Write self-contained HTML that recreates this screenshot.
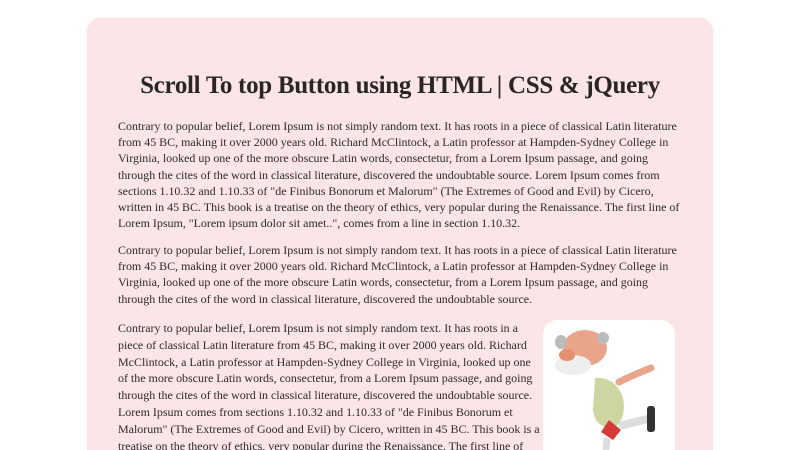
<!DOCTYPE html>
<html><head><meta charset="utf-8"><style>
html,body{margin:0;background:#fff;width:800px;height:450px;overflow:hidden;font-family:"Liberation Serif",serif;color:#2e2a2a}
.card{position:absolute;left:87px;top:18px;width:626px;height:432px;background:#fbe5e6;border-radius:14px 14px 0 0;box-shadow:0 0 4px rgba(0,0,0,.06);overflow:hidden}
h1{position:absolute;left:0;width:626px;top:54px;margin:0;text-align:center;font-size:25px;letter-spacing:-0.3px;font-weight:bold;color:#2b2626}
.p{position:absolute;left:31px;font-size:12px;letter-spacing:-0.02px;line-height:16.2px}
.p div{white-space:nowrap}
.img{position:absolute;left:456px;top:302px;width:132px;height:130px;background:#fff;border-radius:14px 14px 0 0;overflow:hidden}
</style></head><body>
<div class="card">
<h1>Scroll To top Button using HTML | CSS &amp; jQuery</h1>
<div class="p" style="top:100px">
<div>Contrary to popular belief, Lorem Ipsum is not simply random text. It has roots in a piece of classical Latin literature</div>
<div>from 45 BC, making it over 2000 years old. Richard McClintock, a Latin professor at Hampden-Sydney College in</div>
<div>Virginia, looked up one of the more obscure Latin words, consectetur, from a Lorem Ipsum passage, and going</div>
<div>through the cites of the word in classical literature, discovered the undoubtable source. Lorem Ipsum comes from</div>
<div>sections 1.10.32 and 1.10.33 of "de Finibus Bonorum et Malorum" (The Extremes of Good and Evil) by Cicero,</div>
<div>written in 45 BC. This book is a treatise on the theory of ethics, very popular during the Renaissance. The first line of</div>
<div>Lorem Ipsum, "Lorem ipsum dolor sit amet..", comes from a line in section 1.10.32.</div>
</div>
<div class="p" style="top:224px">
<div>Contrary to popular belief, Lorem Ipsum is not simply random text. It has roots in a piece of classical Latin literature</div>
<div>from 45 BC, making it over 2000 years old. Richard McClintock, a Latin professor at Hampden-Sydney College in</div>
<div>Virginia, looked up one of the more obscure Latin words, consectetur, from a Lorem Ipsum passage, and going</div>
<div>through the cites of the word in classical literature, discovered the undoubtable source.</div>
</div>
<div class="p" style="top:302px;line-height:16.8px;height:130px;overflow:hidden">
<div>Contrary to popular belief, Lorem Ipsum is not simply random text. It has roots in a</div>
<div>piece of classical Latin literature from 45 BC, making it over 2000 years old. Richard</div>
<div>McClintock, a Latin professor at Hampden-Sydney College in Virginia, looked up one</div>
<div>of the more obscure Latin words, consectetur, from a Lorem Ipsum passage, and going</div>
<div>through the cites of the word in classical literature, discovered the undoubtable source.</div>
<div>Lorem Ipsum comes from sections 1.10.32 and 1.10.33 of "de Finibus Bonorum et</div>
<div>Malorum" (The Extremes of Good and Evil) by Cicero, written in 45 BC. This book is a</div>
<div>treatise on the theory of ethics, very popular during the Renaissance. The first line of</div>
</div>
<div class="img">
<svg width="132" height="130" viewBox="0 0 132 130">
<ellipse cx="42" cy="28" rx="22" ry="18" fill="#e9a58a"/>
<ellipse cx="30" cy="45" rx="18" ry="10" fill="#eee"/>
<ellipse cx="18" cy="22" rx="6" ry="7" fill="#bbb"/>
<ellipse cx="60" cy="18" rx="6" ry="6" fill="#bbb"/>
<ellipse cx="24" cy="35" rx="8" ry="6" fill="#e38f72"/>
<path d="M52 58 Q72 56 80 78 Q84 100 70 108 Q52 108 50 90 Z" fill="#cdd6a0"/>
<path d="M76 62 Q90 55 108 48" stroke="#e9a58a" stroke-width="7" fill="none" stroke-linecap="round"/>
<path d="M66 100 L78 110 L70 120 L58 112 Z" fill="#d63a35"/>
<path d="M76 106 L108 98" stroke="#ddd" stroke-width="8"/>
<rect x="104" y="86" width="8" height="26" rx="3" fill="#333"/>
<path d="M64 118 L63 130" stroke="#ddd" stroke-width="7"/>
</svg>
</div>
</div>
</body></html>
